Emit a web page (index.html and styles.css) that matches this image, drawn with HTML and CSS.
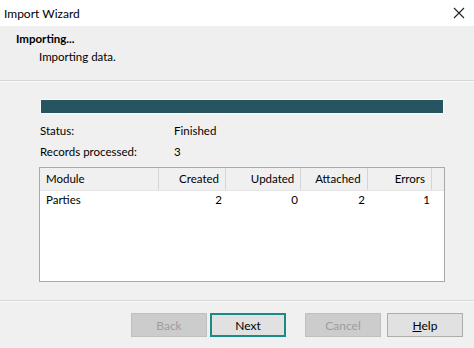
FILE: index.html
```html
<!DOCTYPE html>
<html lang="en">
<head>
    <meta charset="UTF-8">
    <title>Import Wizard</title>
    <link rel="stylesheet" href="styles.css">
</head>
<body>
    <div class="window">
        <div class="titlebar">
            <span class="title">Import Wizard</span>
            <svg class="close" width="12" height="12" viewBox="0 0 12 12">
                <path d="M1 1L11 11M11 1L1 11" stroke="#222" stroke-width="1.1" fill="none"/>
            </svg>
        </div>
        <div class="header">
            <div class="header-title">Importing...</div>
            <div class="header-sub">Importing data.</div>
        </div>
        <div class="content">
            <div class="progress"><div class="progress-fill"></div></div>
            <div class="info">
                <div class="info-row"><span class="label">Status:</span><span>Finished</span></div>
                <div class="info-row"><span class="label">Records processed:</span><span>3</span></div>
            </div>
            <div class="grid">
                <div class="grid-head">
                    <div class="col col-module">Module</div>
                    <div class="col col-created num">Created</div>
                    <div class="col col-updated num">Updated</div>
                    <div class="col col-attached num">Attached</div>
                    <div class="col col-errors num">Errors</div>
                    <div class="col col-rest"></div>
                </div>
                <div class="grid-row">
                    <div class="col col-module">Parties</div>
                    <div class="col col-created num">2</div>
                    <div class="col col-updated num">0</div>
                    <div class="col col-attached num">2</div>
                    <div class="col col-errors num">1</div>
                </div>
            </div>
        </div>
        <div class="footer">
            <button class="btn disabled">Back</button>
            <button class="btn default">Next</button>
            <button class="btn disabled cancel">Cancel</button>
            <button class="btn"><u>H</u>elp</button>
        </div>
    </div>
</body>
</html>
```

FILE: styles.css
```css
body {
    margin: 0;
    font-family: 'Lato', 'Noto Sans', sans-serif;
    font-size: 11.5px;
    color: #000;
    background-color: #f0f0f0;
}

.window {
    width: 474px;
    height: 348px;
    display: flex;
    flex-direction: column;
    overflow: hidden;
}

.titlebar {
    height: 26px;
    background-color: #fff;
    display: flex;
    align-items: center;
    justify-content: space-between;
    padding: 0 9px 0 4px;
    font-size: 12px;
}

.header {
    height: 54px;
    background-color: #efefef;
    border-bottom: 1px solid #d6d6d6;
    box-shadow: 0 1px 0 #fafafa;
    padding-left: 16px;
}

.header-title {
    font-weight: bold;
    margin-top: 4px;
    line-height: 18px;
}

.header-sub {
    margin-left: 23px;
    line-height: 18px;
}

.content {
    height: 219px;
    padding: 0 29px 0 39px;
    border-bottom: 1px solid #d6d6d6;
    box-shadow: 0 1px 0 #fafafa;
}

.progress {
    margin-top: 18px;
    margin-left: 1px;
    width: 404px;
    height: 15px;
    box-sizing: border-box;
    border: 1px solid #f8f8f8;
}

.progress-fill {
    height: 100%;
    background-color: #26555f;
}

.info {
    margin-top: 6px;
    padding-left: 1px;
}

.info-row {
    display: flex;
    height: 21px;
    align-items: center;
}

.label {
    width: 134px;
}

.grid {
    margin-top: 5px;
    width: 406px;
    height: 115px;
    box-sizing: border-box;
    border: 1px solid #a9a9a9;
    background-color: #fff;
}

.grid-head {
    display: flex;
    height: 22px;
    background-color: #f0f0f0;
    border-bottom: 1px solid #e4e4e4;
}

.grid-head .col {
    border-right: 1px solid #d5d5d5;
    line-height: 22px;
}

.grid-head .col-rest {
    border-right: none;
    flex: 1;
}

.grid-row {
    display: flex;
    line-height: 18px;
}

.col {
    box-sizing: border-box;
    padding: 0 6px;
    white-space: nowrap;
}

.num {
    text-align: right;
}

.col-module { width: 120px; }
.col-created { width: 68px; }
.col-updated { width: 76px; }
.col-attached { width: 67px; }
.col-errors { width: 65px; }

.footer {
    display: flex;
    justify-content: flex-end;
    padding: 12px 11px 0 0;
    gap: 3px;
}

.btn {
    width: 76px;
    height: 24px;
    font-family: inherit;
    font-size: 12px;
    background-color: #e1e1e1;
    border: 1px solid #adadad;
    color: #000;
    padding: 0;
}

.btn.disabled {
    background-color: #cccccc;
    border-color: #bfbfbf;
    color: #9d9d9d;
}

.btn.default {
    border: 2px solid #188a8a;
}

.btn.cancel {
    margin-left: 16px;
    margin-right: 3px;
}
```
